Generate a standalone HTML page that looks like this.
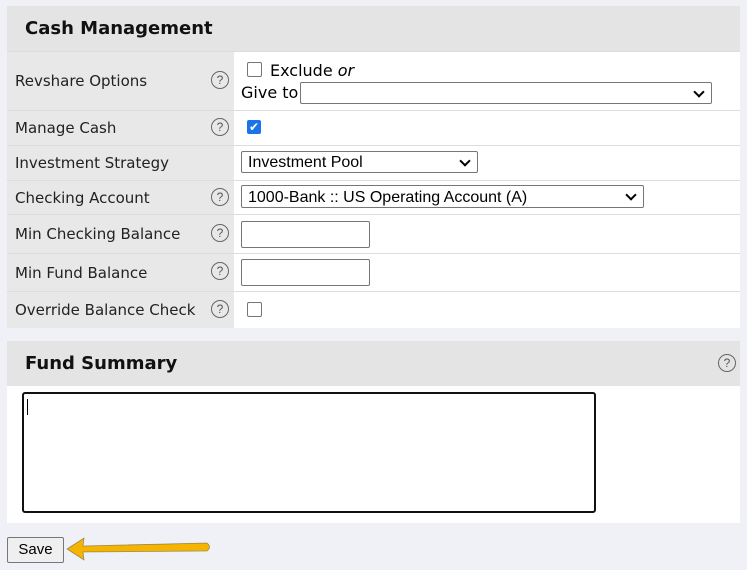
<!DOCTYPE html>
<html><head><style>
body{margin:0;width:747px;height:570px;background:#f0f1f6;font-family:"DejaVu Sans","Liberation Sans",sans-serif;position:relative;overflow:hidden}
.a{position:absolute}
.hdr{background:#e4e4e4;font-weight:bold;font-size:18px;color:#111}
.lab{background:#e8e8e8;font-size:15px;color:#222;left:7px;width:227px;box-sizing:border-box;padding-left:8px;display:flex;align-items:center}
.val{background:#fff;left:234px;width:506px}
.q{position:absolute;left:204px;width:16px;height:16px;border:1.5px solid #666;border-radius:50%;font-size:12px;color:#555;text-align:center;line-height:16px;font-family:"Liberation Sans",sans-serif;font-weight:normal}
.sel{position:absolute;border:1px solid #767676;border-radius:2px;background:#fff;font-family:"Liberation Sans",sans-serif;font-size:16px;color:#000;box-sizing:border-box;padding-left:6px;line-height:20px}
.sel:after{content:"";position:absolute;right:8px;top:5px;width:6px;height:6px;border-right:2px solid #000;border-bottom:2px solid #000;transform:rotate(45deg)}
.inp{position:absolute;border:1px solid #767676;border-radius:2px;background:#fff;box-sizing:border-box}
.cb{position:absolute;width:13px;height:13px;border:1px solid #767676;border-radius:2px;background:#fff}
</style></head><body>
<div class="a hdr" style="left:7px;top:6px;width:733px;height:45px;line-height:45px;padding-left:18px;box-sizing:border-box">Cash Management</div>
<div class="a" style="left:7px;top:51px;width:733px;height:277px;background:#ddd"></div>

<div class="a lab" style="top:52px;height:58px">Revshare Options<span class="q" style="top:19px">?</span></div>
<div class="a val" style="top:52px;height:58px"><div class="cb" style="left:13px;top:10px"></div><span class="a" style="left:36px;top:9px;font-size:16px">Exclude <i>or</i></span><span class="a" style="left:7px;top:31px;font-size:16px">Give to</span><div class="sel" style="left:66px;top:30px;width:412px;height:22px"></div></div>

<div class="a lab" style="top:111px;height:34px">Manage Cash<span class="q" style="top:7px">?</span></div>
<div class="a val" style="top:111px;height:34px"><div class="a" style="left:13px;top:9px;width:14px;height:14px;background:#1a73e8;border-radius:2px;color:#fff;font-size:12px;line-height:14px;text-align:center">✔</div></div>

<div class="a lab" style="top:146px;height:34px">Investment Strategy</div>
<div class="a val" style="top:146px;height:34px"><div class="sel" style="left:7px;top:5px;width:237px;height:22px;line-height:21px">Investment Pool</div></div>

<div class="a lab" style="top:181px;height:33px">Checking Account<span class="q" style="top:7px">?</span></div>
<div class="a val" style="top:181px;height:33px"><div class="sel" style="left:7px;top:4px;width:403px;height:23px;line-height:23px">1000-Bank :: US Operating Account (A)</div></div>

<div class="a lab" style="top:215px;height:38px">Min Checking Balance<span class="q" style="top:9px">?</span></div>
<div class="a val" style="top:215px;height:38px"><div class="inp" style="left:7px;top:6px;width:129px;height:27px"></div></div>

<div class="a lab" style="top:254px;height:37px">Min Fund Balance<span class="q" style="top:8px">?</span></div>
<div class="a val" style="top:254px;height:37px"><div class="inp" style="left:7px;top:5px;width:129px;height:27px"></div></div>

<div class="a lab" style="top:292px;height:36px">Override Balance Check<span class="q" style="top:8px">?</span></div>
<div class="a val" style="top:292px;height:36px"><div class="cb" style="left:13px;top:10px"></div></div>

<div class="a hdr" style="left:7px;top:341px;width:733px;height:45px;line-height:45px;padding-left:18px;box-sizing:border-box">Fund Summary<span class="q" style="left:711px;top:13px">?</span></div>
<div class="a" style="left:7px;top:386px;width:733px;height:137px;background:#fff"></div>
<div class="a" style="left:22px;top:392px;width:574px;height:121px;border:2px solid #111;border-radius:3px;box-sizing:border-box"><div class="a" style="left:3px;top:5px;width:1px;height:16px;background:#000"></div></div>

<div class="a" style="left:7px;top:537px;width:57px;height:26px;border:1px solid #767676;border-radius:2px;background:#efefef;box-sizing:border-box;font-family:'Liberation Sans',sans-serif;font-size:15px;text-align:center;line-height:24px">Save</div>
<svg class="a" style="left:64px;top:535px" width="150" height="30"><path d="M3 14 L20 3 L19 11 L143 8 Q148 12 143 16 L19 17 L20 25 Z" fill="#f5b400" stroke="#444" stroke-width="0.8" stroke-opacity="0.5"/></svg>
</body></html>
